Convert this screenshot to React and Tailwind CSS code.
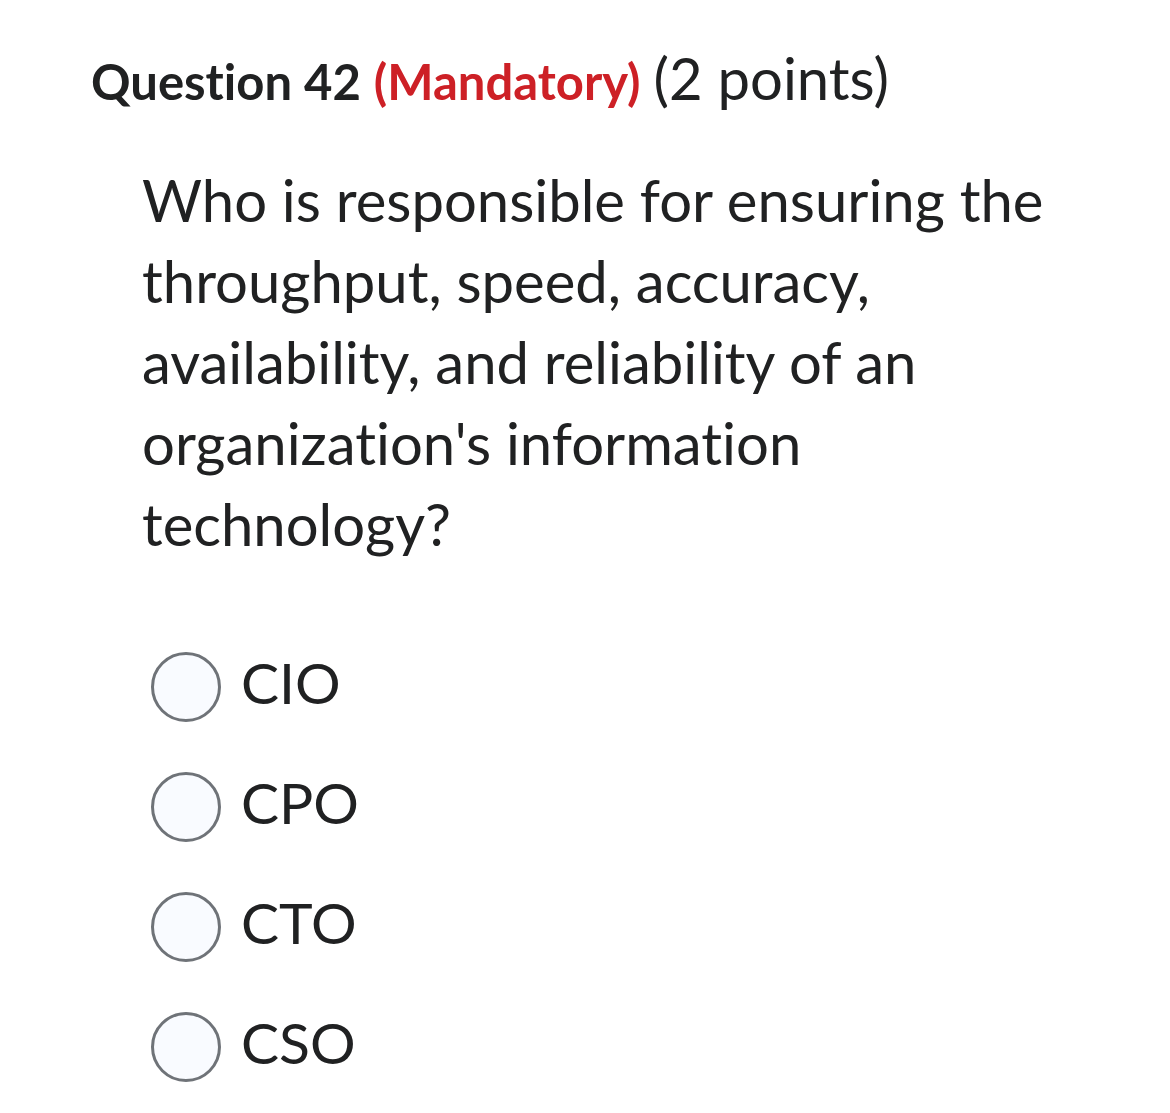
import React from 'react';

const options = ['CIO', 'CPO', 'CTO', 'CSO'];

export default function App() {
  return (
    <div className="min-h-[1113px] w-[1170px] bg-white text-[#202122] font-['Lato',sans-serif] [font-variant-ligatures:none]">
      <div className="pl-[91px] pt-[49px]">
        <h2 className="flex items-baseline leading-none">
          <span className="text-[49px] font-bold">Question 42</span>
          <span className="ml-[13px] text-[49px] font-bold text-[#cd2026]">(Mandatory)</span>
          <span className="ml-[13px] text-[58px] font-normal">(2 points)</span>
        </h2>
      </div>
      <div className="pl-[142px] pt-[52px] pr-[100px]">
        <p className="text-[58px] leading-[81px] max-w-[925px]">
          Who is responsible for ensuring the throughput, speed, accuracy, availability, and reliability of an organization's information technology?
        </p>
        <div className="mt-[88px] flex flex-col gap-[50px] pl-[9px]">
          {options.map((o) => (
            <label key={o} className="flex items-center gap-[20px]">
              <span className="h-[70px] w-[70px] shrink-0 rounded-full border-[3px] border-[#6f7378] bg-[#f9fbff]" />
              <span className="pb-[10px] text-[57px] leading-[60px]">{o}</span>
            </label>
          ))}
        </div>
      </div>
    </div>
  );
}
